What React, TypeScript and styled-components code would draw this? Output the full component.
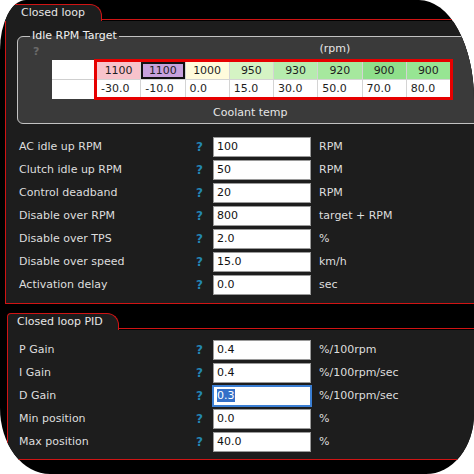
import React from 'react';
import styled, { createGlobalStyle } from 'styled-components';

const GlobalStyle = createGlobalStyle`
  html, body {
    margin: 0;
    padding: 0;
    background: #ffffff;
  }
  body {
    font-family: "DejaVu Sans", Verdana, sans-serif;
    font-size: 11px;
  }
`;

// the screenshot is cut out with uneven rounded corners
const Frame = styled.div`
  width: 474px;
  height: 474px;
  overflow: hidden;
  background: #000;
  color: #dedede;
  border-radius: 26px 55px 48px 50px / 50px 100px 60px 66px;
`;

const Section = styled.section<{ $left: number; $top: number }>`
  margin-left: ${p => p.$left}px;
  margin-top: ${p => p.$top}px;
  width: ${p => 490 - p.$left}px;
`;

const TabBar = styled.div<{ $height: number }>`
  display: flex;
  align-items: flex-end;
  height: ${p => p.$height}px;
`;

const Tab = styled.div<{ $offset: number; $width: number; $pad: number; $leftBorder?: boolean }>`
  box-sizing: border-box;
  margin-left: ${p => p.$offset}px;
  width: ${p => p.$width}px;
  height: 17px;
  padding-left: ${p => p.$pad}px;
  background: #1d1d1d;
  border-top: 1px solid #d01414;
  border-right: 1px solid #d01414;
  border-left: ${p => (p.$leftBorder ? '1px solid #d01414' : 'none')};
  border-radius: 4px 12px 0 0;
  color: #e6e6e6;
  line-height: 16px;
  white-space: nowrap;
`;

const TabLine = styled.div`
  flex: 1;
  height: 1px;
  margin-bottom: 1px;
  background: #d01414;
`;

const Panel = styled.div<{ $padTop: number; $padBottom: number; $padLeft: number }>`
  background: #1d1d1d;
  border-left: 1px solid #d01414;
  border-bottom: 1px solid #d01414;
  padding: ${p => p.$padTop}px 0 ${p => p.$padBottom}px ${p => p.$padLeft}px;
`;

const Group = styled.fieldset`
  margin: 0;
  padding: 0 0 3px 0;
  border: 1px solid #c2c2c2;
  border-radius: 6px;
  background: #3a3a3a;
`;

const Legend = styled.legend`
  margin-left: 12px;
  padding: 0 2px;
  color: #f0f0f0;
  line-height: 14px;
`;

const GroupHeader = styled.div`
  display: flex;
  align-items: flex-start;
  height: 16px;
`;

const GreyHelp = styled.span`
  margin-left: 15px;
  padding-top: 2px;
  line-height: 14px;
  color: #6a6a6a;
  font-weight: bold;
`;

const AxisUnit = styled.span`
  margin-left: 280px;
  line-height: 12px;
  color: #e6e6e6;
`;

const Table = styled.div`
  display: flex;
  align-items: center;
  margin-left: 34px;
  height: 41px;
`;

const AxisColumn = styled.div`
  display: flex;
  flex-direction: column;
  gap: 1px;
  width: 42px;
  background: #cfcfcf;
`;

const AxisCell = styled.div`
  height: 19px;
  background: #ffffff;
`;

const RedBox = styled.div`
  display: grid;
  grid-template-columns: repeat(8, 1fr);
  grid-template-rows: 17px 17px;
  gap: 1px;
  width: 353px;
  border: 3px solid #e60000;
  background: #d4d4d4;
`;

const Cell = styled.div<{ $bg: string; $selected?: boolean; $left?: boolean }>`
  box-sizing: border-box;
  background: ${p => p.$bg};
  color: #1e1e1e;
  line-height: 17px;
  text-align: ${p => (p.$left ? 'left' : 'center')};
  padding-left: ${p => (p.$left ? 4 : 0)}px;
  box-shadow: ${p => (p.$selected ? 'inset 0 0 0 2px #111' : 'none')};
`;

const Caption = styled.div`
  margin: 6px 0 0 195px;
  line-height: 14px;
  color: #e6e6e6;
`;

const Rows = styled.div<{ $indent: number; $top: number }>`
  padding-left: ${p => p.$indent}px;
  margin-top: ${p => p.$top}px;
`;

const Row = styled.div`
  display: grid;
  grid-template-columns: 177px 17px 98px auto;
  align-items: center;
  height: 23px;
`;

const Label = styled.span`
  color: #dedede;
  white-space: nowrap;
`;

const Help = styled.span`
  color: #2386b4;
  font-weight: bold;
  font-size: 12px;
`;

const ValueBox = styled.div<{ $focused?: boolean }>`
  box-sizing: border-box;
  height: 20px;
  padding-left: 3px;
  background: #ffffff;
  color: #111;
  line-height: 18px;
  border: 1px solid ${p => (p.$focused ? '#3b7fd4' : '#9a9a9a')};
  box-shadow: ${p => (p.$focused ? '0 0 0 1px #3b7fd4' : 'none')};
  white-space: nowrap;
`;

const Selection = styled.span`
  background: #3470c8;
  color: #ffffff;
`;

const Unit = styled.span`
  margin-left: 8px;
  color: #dedede;
  white-space: nowrap;
`;

const rpmTargets = [
  { v: '1100', bg: '#f8c3cb' },
  { v: '1100', bg: '#c7a1dc', selected: true },
  { v: '1000', bg: '#fffbdc' },
  { v: '950', bg: '#d5f4c4' },
  { v: '930', bg: '#b6ecae' },
  { v: '920', bg: '#a6e89e' },
  { v: '900', bg: '#8fdf8b' },
  { v: '900', bg: '#97e593' },
];

const coolant = ['-30.0', '-10.0', '0.0', '15.0', '30.0', '50.0', '70.0', '80.0'];

interface Setting {
  label: string;
  value: string;
  unit: string;
  focused?: boolean;
}

const loopSettings: Setting[] = [
  { label: 'AC idle up RPM', value: '100', unit: 'RPM' },
  { label: 'Clutch idle up RPM', value: '50', unit: 'RPM' },
  { label: 'Control deadband', value: '20', unit: 'RPM' },
  { label: 'Disable over RPM', value: '800', unit: 'target + RPM' },
  { label: 'Disable over TPS', value: '2.0', unit: '%' },
  { label: 'Disable over speed', value: '15.0', unit: 'km/h' },
  { label: 'Activation delay', value: '0.0', unit: 'sec' },
];

const pidSettings: Setting[] = [
  { label: 'P Gain', value: '0.4', unit: '%/100rpm' },
  { label: 'I Gain', value: '0.4', unit: '%/100rpm/sec' },
  { label: 'D Gain', value: '0.3', unit: '%/100rpm/sec', focused: true },
  { label: 'Min position', value: '0.0', unit: '%' },
  { label: 'Max position', value: '40.0', unit: '%' },
];

const SettingRow = ({ s }: { s: Setting }) => (
  <Row>
    <Label>{s.label}</Label>
    <Help>?</Help>
    <ValueBox $focused={s.focused}>
      {s.focused ? <Selection>{s.value}</Selection> : s.value}
    </ValueBox>
    <Unit>{s.unit}</Unit>
  </Row>
);

const App = () => (
  <>
    <GlobalStyle />
    <Frame>
      <Section $left={5} $top={0}>
        <TabBar $height={21}>
          <Tab $offset={-25} $width={122} $pad={41}>Closed loop</Tab>
          <TabLine />
        </TabBar>
        <Panel $padTop={8} $padBottom={7} $padLeft={11}>
          <Group>
            <Legend>Idle RPM Target</Legend>
            <GroupHeader>
              <GreyHelp>?</GreyHelp>
              <AxisUnit>(rpm)</AxisUnit>
            </GroupHeader>
            <Table>
              <AxisColumn>
                <AxisCell />
                <AxisCell />
              </AxisColumn>
              <RedBox>
                {rpmTargets.map((c, i) => (
                  <Cell key={`t${i}`} $bg={c.bg} $selected={c.selected}>
                    {c.v}
                  </Cell>
                ))}
                {coolant.map((v, i) => (
                  <Cell key={`c${i}`} $bg="#ffffff" $left>
                    {v}
                  </Cell>
                ))}
              </RedBox>
            </Table>
            <Caption>Coolant temp</Caption>
          </Group>
          <Rows $indent={2} $top={11}>
            {loopSettings.map(s => (
              <SettingRow key={s.label} s={s} />
            ))}
          </Rows>
        </Panel>
      </Section>
      <Section $left={7} $top={9}>
        <TabBar $height={17}>
          <Tab $offset={0} $width={112} $pad={9} $leftBorder>
            Closed loop PID
          </Tab>
          <TabLine />
        </TabBar>
        <Panel $padTop={8} $padBottom={6} $padLeft={11}>
          <Rows $indent={0} $top={0}>
            {pidSettings.map(s => (
              <SettingRow key={s.label} s={s} />
            ))}
          </Rows>
        </Panel>
      </Section>
    </Frame>
  </>
);

export default App;
